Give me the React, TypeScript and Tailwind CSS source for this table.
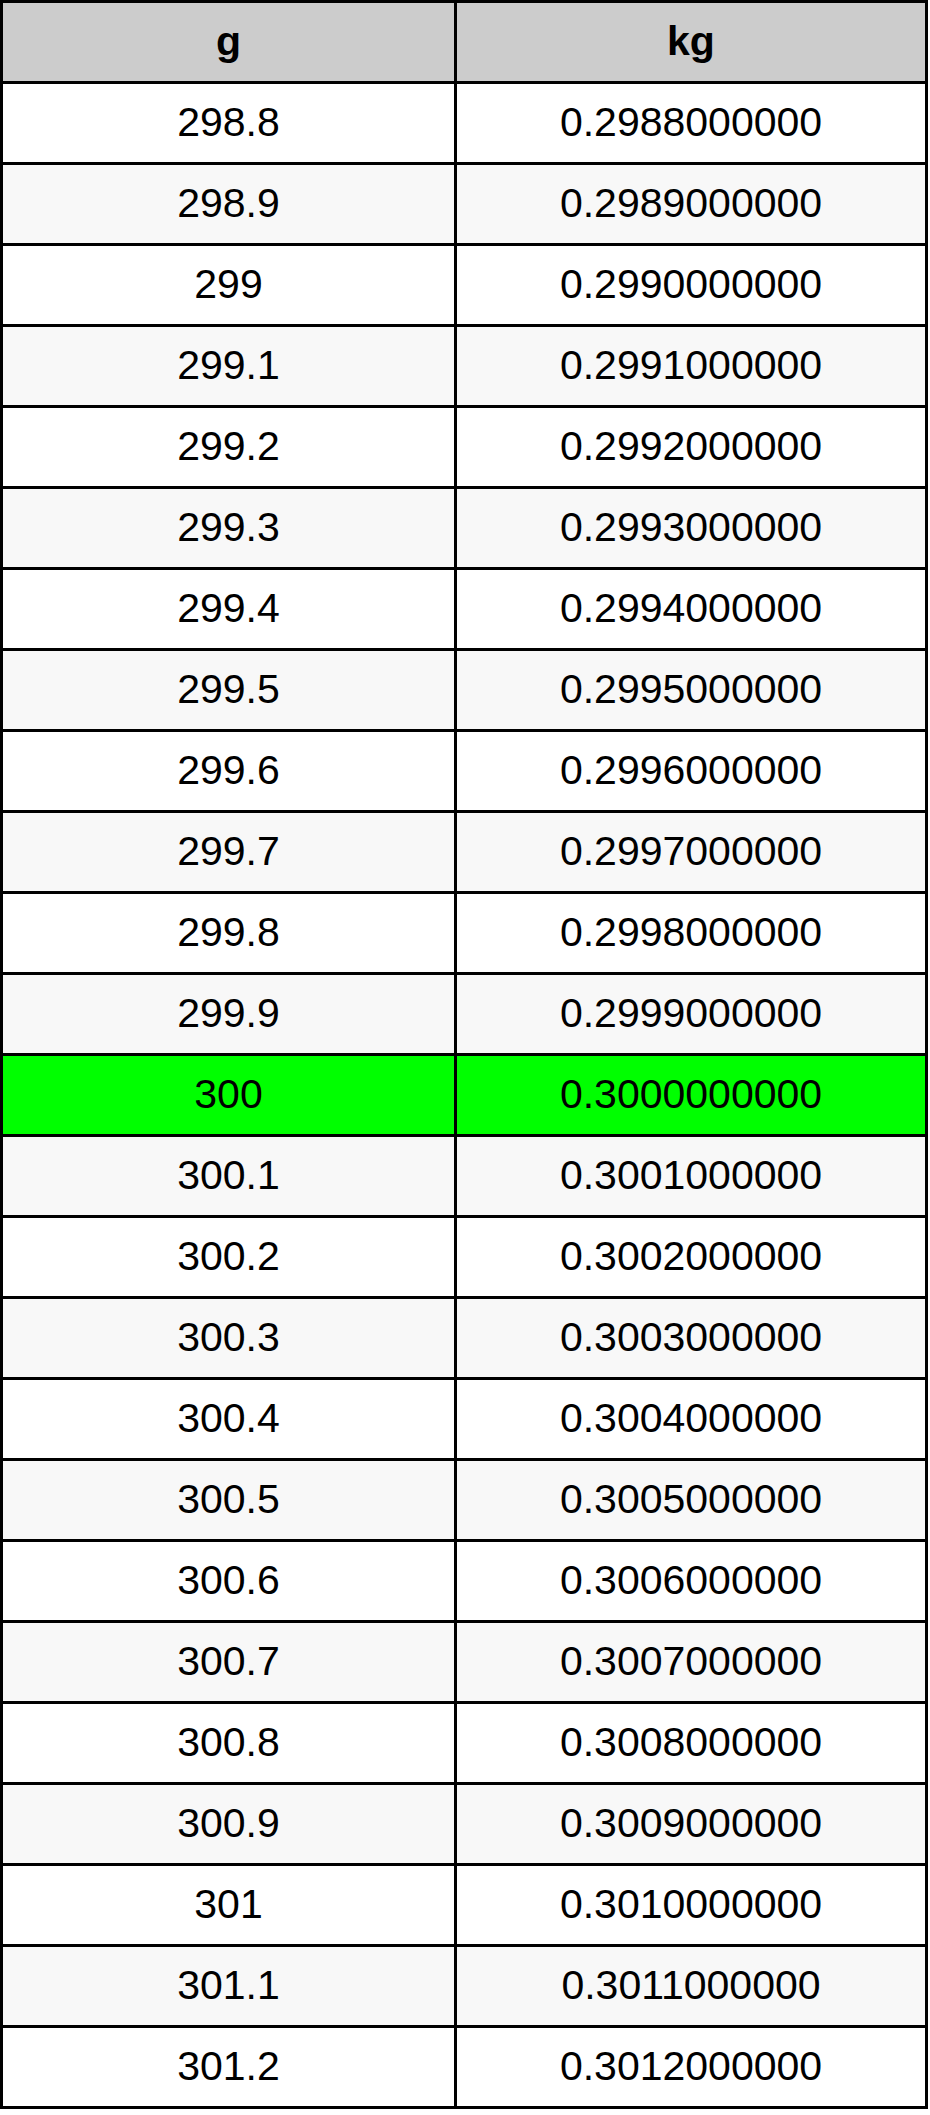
const rows = Array.from({ length: 25 }, (_, i) => {
  const n = 2988 + i;
  const g = n % 10 === 0 ? String(n / 10) : (n / 10).toFixed(1);
  const kg = "0." + String(n).padEnd(10, "0");
  return { g, kg };
});

export default function App() {
  return (
    <div className="min-h-screen bg-white font-['Liberation_Sans',Arial,sans-serif] text-black">
      <div className="w-[928px] border-[3px] border-black">
        <div className="flex h-[78px] bg-[#cccccc] text-[41px] font-bold">
          <div className="flex w-[454px] items-center justify-center border-r-[3px] border-black">
            g
          </div>
          <div className="flex flex-1 items-center justify-center">kg</div>
        </div>
        {rows.map((r, i) => {
          const bg = i === 12 ? "bg-[#00ff00]" : i % 2 === 1 ? "bg-[#f8f8f8]" : "bg-white";
          return (
            <div
              key={r.g}
              className={`flex h-[81px] border-t-[3px] border-black text-[41px] ${bg}`}
            >
              <div className="flex w-[454px] items-center justify-center border-r-[3px] border-black">
                {r.g}
              </div>
              <div className="flex flex-1 items-center justify-center">{r.kg}</div>
            </div>
          );
        })}
      </div>
    </div>
  );
}
